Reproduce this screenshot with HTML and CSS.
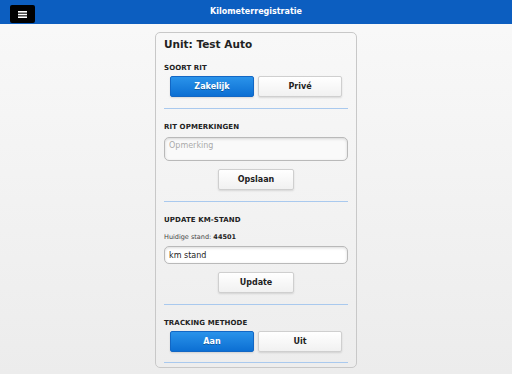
FILE: index.html
```html
<!DOCTYPE html>
<html lang="nl">
<head>
<meta charset="UTF-8">
<meta name="viewport" content="width=device-width, initial-scale=1.0">
<title>Kilometerregistratie</title>
<link rel="stylesheet" href="styles.css">
</head>
<body>
<header class="topbar">
    <button class="menu-button" aria-label="Menu">
        <svg width="9" height="7" viewBox="0 0 9 7"><rect x="0" y="0" width="9" height="1.6" fill="#fff"/><rect x="0" y="2.7" width="9" height="1.6" fill="#fff"/><rect x="0" y="5.4" width="9" height="1.6" fill="#fff"/></svg>
    </button>
    <h1>Kilometerregistratie</h1>
</header>

<main class="page">
    <div class="card">
        <h2 class="unit">Unit: Test Auto</h2>

        <section class="block block-first">
            <div class="label">SOORT RIT</div>
            <div class="pair">
                <button class="btn btn-active">Zakelijk</button>
                <button class="btn">Privé</button>
            </div>
        </section>

        <section class="block">
            <div class="label">RIT OPMERKINGEN</div>
            <textarea class="field area" placeholder="Opmerking"></textarea>
            <div class="center">
                <button class="btn btn-small">Opslaan</button>
            </div>
        </section>

        <section class="block">
            <div class="label">UPDATE KM-STAND</div>
            <div class="current">Huidige stand: <strong>44501</strong></div>
            <input class="field line" type="text" value="km stand">
            <div class="center">
                <button class="btn btn-small">Update</button>
            </div>
        </section>

        <section class="block block-last">
            <div class="label">TRACKING METHODE</div>
            <div class="pair">
                <button class="btn btn-active">Aan</button>
                <button class="btn">Uit</button>
            </div>
        </section>
    </div>
</main>
</body>
</html>
```

FILE: styles.css
```css
body {
    margin: 0;
    padding: 0;
    font-family: 'DejaVu Sans', Verdana, sans-serif;
    background: linear-gradient(#f9f9f9, #ececec);
    min-height: 374px;
    color: #222;
    overflow: hidden;
}
.topbar {
    height: 24px;
    background: #0c5ec0;
    display: flex;
    align-items: center;
    justify-content: center;
    position: relative;
}
.topbar h1 {
    margin: 0;
    color: #fff;
    font-size: 8px;
    font-weight: bold;
    line-height: 24px;
}
.menu-button {
    position: absolute;
    left: 10px;
    top: 5px;
    width: 25px;
    height: 18px;
    border: none;
    border-radius: 2px;
    background: #000;
    padding: 0;
    display: flex;
    align-items: center;
    justify-content: center;
}
.page {
    display: flex;
    justify-content: center;
    padding-top: 8px;
}
.card {
    width: 184px;
    padding: 0 8px 4px;
    border: 1px solid #c8c8c8;
    border-radius: 5px;
    background: linear-gradient(#f8f8f8, #ededed);
}
.unit {
    margin: 0;
    padding-top: 5px;
    font-size: 10.5px;
    line-height: 13px;
    font-weight: bold;
}
.block {
    padding: 14px 0 11px;
    border-bottom: 1px solid #a9c9ee;
}
.block-first {
    padding-top: 13px;
}
.block-last {
    padding-top: 14px;
    padding-bottom: 10px;
}
.label {
    font-size: 7px;
    font-weight: bold;
    line-height: 8px;
    letter-spacing: 0.1px;
}
.pair {
    display: grid;
    grid-template-columns: 84px 84px;
    gap: 4px;
    margin: 4px 6px 0;
}
.btn {
    height: 21px;
    padding: 0;
    font-family: 'DejaVu Sans', Verdana, sans-serif;
    font-size: 8px;
    font-weight: bold;
    color: #222;
    border: 1px solid #cfcfcf;
    border-radius: 2px;
    background: linear-gradient(#ffffff, #f1f1f1);
    box-shadow: 0 1px 2px rgba(0, 0, 0, 0.12);
}
.btn-active {
    color: #fff;
    border-color: #1367c4;
    background: linear-gradient(#2a93ea, #0c6fd3);
    text-shadow: 0 1px 0 rgba(0, 0, 0, 0.3);
}
.btn-small {
    width: 76px;
}
.center {
    display: flex;
    justify-content: center;
    margin-top: 8px;
}
.field {
    display: block;
    box-sizing: border-box;
    width: 184px;
    margin: 0;
    font-family: 'DejaVu Sans', Verdana, sans-serif;
    font-size: 8px;
    color: #222;
    border: 1px solid #b9b9b9;
    border-radius: 5px;
    background: #fafafa;
    box-shadow: inset 0 1px 3px rgba(0, 0, 0, 0.15);
    outline: none;
}
.area {
    margin-top: 6px;
    height: 24px;
    padding: 3px 4px;
    resize: none;
}
.area::placeholder {
    color: #aaa;
}
.line {
    margin-top: 5px;
    height: 18px;
    padding: 0 4px;
    background: #fff;
}
.current {
    margin-top: 9px;
    font-size: 6.5px;
    line-height: 8px;
    color: #444;
}
.current strong {
    color: #222;
}
```
